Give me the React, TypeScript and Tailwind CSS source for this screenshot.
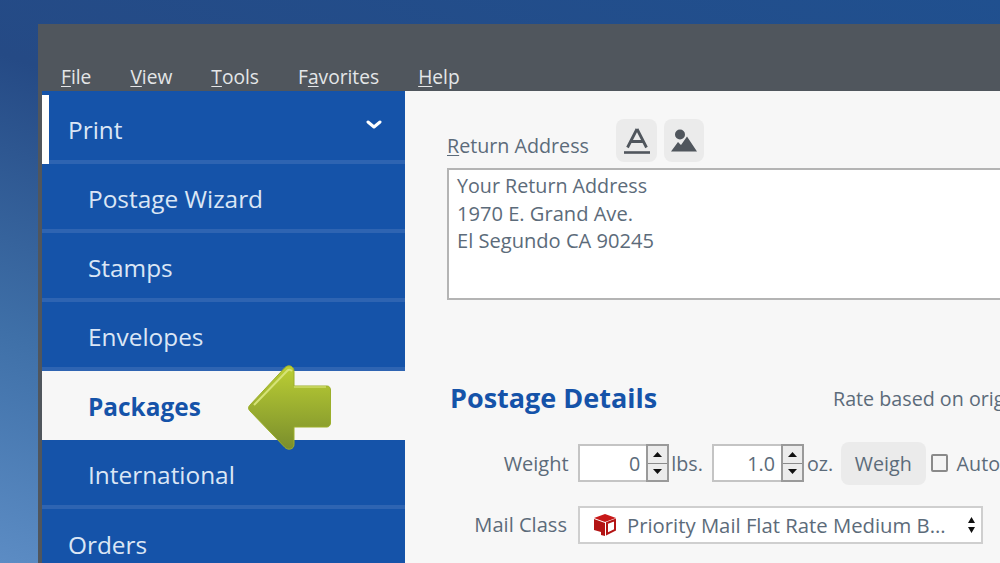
const menus = [
  { before: "", key: "F", after: "ile" },
  { before: "", key: "V", after: "iew" },
  { before: "", key: "T", after: "ools" },
  { before: "F", key: "a", after: "vorites" },
  { before: "", key: "H", after: "elp" },
];

const navItems = ["Postage Wizard", "Stamps", "Envelopes", "Packages", "International"];

function Spinner() {
  return (
    <div className="flex h-[38px] w-[23px] flex-col gap-px border-2 border-[#9a9a9a] bg-[#8a8a8a]">
      <div className="flex flex-1 items-center justify-center bg-[#ececec]">
        <svg width="9" height="5" viewBox="0 0 9 5"><path d="M4.500 0 9 5H0z" fill="#111" /></svg>
      </div>
      <div className="flex flex-1 items-center justify-center bg-[#ececec]">
        <svg width="9" height="5" viewBox="0 0 9 5"><path d="M0 0h9L4.500 5z" fill="#111" /></svg>
      </div>
    </div>
  );
}

function NumberField({ value, width }: { value: string; width: string }) {
  return (
    <div className={`flex h-[38px] items-center justify-between border-2 border-[#c4c4c4] bg-white ${width}`}>
      <span className="flex-1 pr-[8px] pt-[2px] text-right">{value}</span>
      <div className="-m-[2px]">
        <Spinner />
      </div>
    </div>
  );
}

export default function App() {
  return (
    <div
      className="relative h-[563px] w-[1000px] overflow-hidden bg-[linear-gradient(200deg,#20508f_0%,#254a85_45%,#3f70a8_75%,#5c8cc4_100%)] pl-[38px] pt-6 text-[19.7px] text-[#5c6b7a]"
      style={{ fontFamily: '"Open Sans", "Noto Sans", sans-serif' }}
    >
      <div className="flex h-[539px] w-[962px] flex-col bg-[#50565d]">
        <div className="flex h-[67px] items-end gap-[39px] pl-[23px] text-[19.2px] text-[#e4e6e8]">
          {menus.map((m) => (
            <span key={m.key} className="mb-px leading-[27px]">
              {m.before}
              <span className="underline underline-offset-2">{m.key}</span>
              {m.after}
            </span>
          ))}
        </div>

        <div className="flex min-h-0 flex-1 pl-1">
          <nav className="w-[363px] shrink-0 bg-[#1553a9] pt-1 text-[24.4px] text-[#dbe6f5]">
            <div className="flex h-[69px]">
              <div className="w-[7px] bg-white" />
              <div className="flex flex-1 items-center justify-between border-b-4 border-[#2e64b2] pl-[19px] pr-[23px] pt-[6px]">
                <span>Print</span>
                <svg width="16" height="10" viewBox="0 0 16 10" className="-mt-[11px]">
                  <path d="M2 2l6 5 6-5" fill="none" stroke="#fff" strokeWidth="3" strokeLinecap="round" strokeLinejoin="round" />
                </svg>
              </div>
            </div>
            {navItems.map((item) =>
              item === "Packages" ? (
                <div
                  key={item}
                  className="flex h-[69px] items-center bg-[#f7f7f7] pl-[46px] pt-[4px] font-bold text-[#1553a9]"
                >
                  {item}
                </div>
              ) : (
                <div
                  key={item}
                  className="flex h-[69px] items-center border-b-4 border-[#2e64b2] pl-[46px] pt-[6px]"
                >
                  {item}
                </div>
              ),
            )}
            <div className="flex h-[69px] items-center pl-[26px] pt-[4px]">Orders</div>
          </nav>

          <main className="min-w-0 flex-1 overflow-hidden bg-[#f7f7f7] pl-[42px] pt-[28px]">
            <div className="flex h-[49px] items-start">
              <span className="mt-[13px] w-[169px] leading-[27px]">
                <span className="underline underline-offset-2">R</span>eturn Address
              </span>
              <div className="flex gap-[7px]">
                <button className="flex h-[43px] w-[41px] items-center justify-center rounded-lg bg-[#ebebeb]">
                  <svg width="28" height="30" viewBox="0 0 28 30">
                    <path d="M14 3 4.500 21.500M14 3l9.500 18.500M8 15.500h12" fill="none" stroke="#50565d" strokeWidth="2.800" />
                    <path d="M1 26.500h26" stroke="#50565d" strokeWidth="2.600" />
                  </svg>
                </button>
                <button className="flex h-[43px] w-[40px] items-center justify-center rounded-lg bg-[#ebebeb]">
                  <svg width="28" height="26" viewBox="0 0 28 26">
                    <circle cx="10" cy="6.500" r="5" fill="#50565d" />
                    <path d="M1 23.500 8 14l3 3 6-8.500 10 15z" fill="#50565d" />
                  </svg>
                </button>
              </div>
            </div>

            <div className="h-[132px] w-[600px] border-2 border-[#b4b4b4] bg-white pl-2 pt-[2px] leading-[27.5px]">
              <div>Your Return Address</div>
              <div className="text-[20.1px]">1970 E. Grand Ave.</div>
              <div className="text-[20.1px]">El Segundo CA 90245</div>
            </div>

            <div className="mt-[79px] flex h-[40px] items-center whitespace-nowrap">
              <h2 className="-mt-[2px] ml-[3px] w-[383px] shrink-0 text-[27px] font-bold text-[#1553a9]">Postage Details</h2>
              <span>Rate based on origin ZIP</span>
            </div>

            <div className="mt-[22px] flex h-[44px] items-center whitespace-nowrap">
              <span className="w-[131px] pr-[9px] pt-[2px] text-right text-[20px]">Weight</span>
              <NumberField value="0" width="w-[92px]" />
              <span className="ml-[2px] w-[41px] pt-[2px]">lbs.</span>
              <NumberField value="1.0" width="w-[92px]" />
              <span className="ml-[3px] w-[32px] pt-[2px]">oz.</span>
              <button className="ml-[2px] h-[43px] w-[85px] rounded-lg bg-[#ebebeb] pt-[2px] text-center text-[#5c6b7a]">Weigh</button>
              <span className="ml-[5px] h-[18px] w-[17px] shrink-0 rounded-[2px] border-2 border-[#8a8a8a] bg-[#f4f4f4]" />
              <span className="ml-[9px] pt-[2px]">Auto</span>
            </div>

            <div className="mt-[21px] flex items-center whitespace-nowrap">
              <span className="w-[131px] pr-[11px] text-right text-[20.1px]">Mail Class</span>
              <div className="flex h-[38px] w-[405px] shrink-0 items-center border-2 border-[#cfcfcf] bg-white pl-[13px] pr-[6px] text-[20.3px]">
                <svg width="24" height="24" viewBox="0 0 24 24" className="mr-[10px] shrink-0">
                  <path d="M1 5 12 1l11 4-11 4z" fill="#c81818" />
                  <path d="M1 6l11 4v13l-4-1v-3l-7-2z" fill="#b31414" />
                  <path d="M14 10l8-3v10l-8 4z" fill="#fff" stroke="#b31414" strokeWidth="2" />
                </svg>
                <span className="flex-1">Priority Mail Flat Rate Medium B...</span>
                <svg width="7" height="16" viewBox="0 0 7 16">
                  <path d="M3.500 0 7 6H0zM0 10h7l-3.500 6z" fill="#111" />
                </svg>
              </div>
            </div>
          </main>
        </div>
      </div>

      <svg width="86" height="88" viewBox="0 0 86 88" className="absolute left-[247px] top-[364px]">
        <defs>
          <linearGradient id="arrowFill" x1="0" y1="0" x2="0" y2="1">
            <stop offset="0" stopColor="#bccf34" />
            <stop offset="1" stopColor="#7a8e2c" />
          </linearGradient>
        </defs>
        <path
          d="M38 3.500c3-3 9-2 9 4V22h33c2.500 0 3.500 2 3.500 4v33c0 2-1.500 4-3.500 4H47v17.500c0 5-6 6-9 3L3 47c-2-2-2-4 0-6z"
          fill="url(#arrowFill)"
          stroke="#9caf2b"
        />
        <path d="M7 41 40 7c2-2 4-1 5 0" fill="none" stroke="#d6e377" strokeWidth="2" />
        <path d="M47 23h32" fill="none" stroke="#cfdc6a" strokeWidth="1.500" />
      </svg>
    </div>
  );
}
